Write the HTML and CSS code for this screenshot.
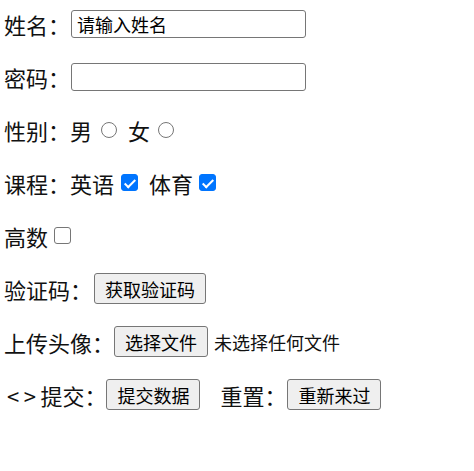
FILE: index.html
```html
<!DOCTYPE html>
<html lang="zh-CN">
<head>
<meta charset="utf-8">
<title>表单</title>
<link rel="stylesheet" href="styles.css">
</head>
<body>
<form class="form">
  <div class="row"><span class="lbl">姓名：</span><input class="text" type="text" value="请输入姓名"></div>
  <div class="row"><span class="lbl">密码：</span><input class="text" type="password"></div>
  <div class="row"><span class="lbl">性别：男</span><input class="radio r1" type="radio" name="sex"><span class="lbl">女</span><input class="radio r2" type="radio" name="sex"></div>
  <div class="row"><span class="lbl">课程：英语</span><input class="cb cb1" type="checkbox" checked><span class="lbl">体育</span><input class="cb cb2" type="checkbox" checked></div>
  <div class="row"><span class="lbl">高数</span><input class="cb cb2" type="checkbox"></div>
  <div class="row"><span class="lbl">验证码：</span><button class="btn btn-code" type="button">获取验证码</button></div>
  <div class="row"><span class="lbl">上传头像：</span><label class="btn">选择文件</label><span class="filename">未选择任何文件</span></div>
  <div class="row"><span class="lbl"><span class="angle">&lt;&gt;</span>提交：</span><button class="btn" type="submit">提交数据</button><span class="lbl reset-lbl">重置：</span><button class="btn btn-reset" type="reset">重新来过</button></div>
</form>
</body>
</html>
```

FILE: styles.css
```css
html, body {
  margin: 0;
  padding: 0;
  background: #fff;
}

body {
  font-family: "Noto Sans CJK SC", "Noto Sans", sans-serif;
  font-size: 22px;
  color: #111;
}

.form {
  padding: 8px 0 0 4px;
}

.row {
  display: flex;
  align-items: center;
  height: 31px;
  margin-bottom: 22px;
  white-space: nowrap;
}

.lbl {
  line-height: 30px;
}

.angle {
  letter-spacing: 4.5px;
  padding-left: 3px;
}

.text {
  box-sizing: border-box;
  width: 235px;
  height: 28px;
  margin: 0 0 0 1px;
  padding: 0 5px;
  border: 1px solid #767676;
  border-radius: 3px;
  font-family: "Noto Sans CJK SC", "Noto Sans", sans-serif;
  font-size: 18px;
  color: #000;
  background: #fff;
}

.radio {
  -webkit-appearance: none;
  appearance: none;
  box-sizing: border-box;
  width: 16px;
  height: 16px;
  margin: 0;
  border: 1px solid #767676;
  border-radius: 50%;
  background: #fff;
}

.r1 {
  margin: 0 11px 0 9px;
}

.r2 {
  margin: 0 0 0 8px;
}

.cb {
  -webkit-appearance: none;
  appearance: none;
  box-sizing: border-box;
  position: relative;
  width: 17px;
  height: 17px;
  margin: 0;
  border: 1px solid #767676;
  border-radius: 3px;
  background: #fff;
}

.cb:checked {
  border-color: #0075ff;
  background: #0075ff;
}

.cb:checked::before {
  content: "";
  position: absolute;
  left: 5px;
  top: 1.5px;
  width: 4px;
  height: 9px;
  border-right: 2.5px solid #fff;
  border-bottom: 2.5px solid #fff;
  transform: rotate(45deg);
}

.cb1 {
  margin: 0 11px 0 7px;
}

.cb2 {
  margin: 0 0 0 6px;
}

.btn {
  box-sizing: border-box;
  display: inline-flex;
  align-items: center;
  height: 31px;
  margin: 0;
  padding: 0 10px;
  border: 1px solid #767676;
  border-radius: 3px;
  background: #efefef;
  font-family: "Noto Sans CJK SC", "Noto Sans", sans-serif;
  font-size: 18px;
  color: #000;
  line-height: 1;
}

.btn-code {
  margin-left: 2px;
}

.filename {
  margin-left: 6px;
  font-size: 18px;
}

.reset-lbl {
  margin-left: 20px;
}

.btn-reset {
  margin-left: 1px;
}
```
